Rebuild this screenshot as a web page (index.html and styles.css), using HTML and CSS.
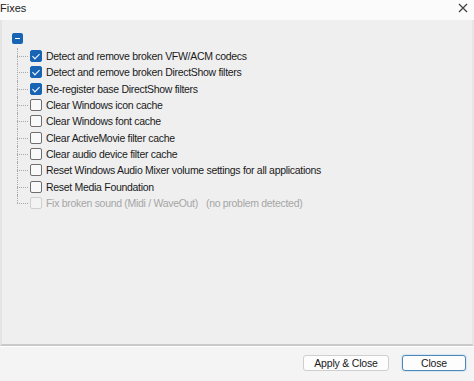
FILE: index.html
```html
<!DOCTYPE html>
<html lang="en">
<head>
    <title>Fixes</title>
    <link rel="stylesheet" href="styles.css">
</head>
<body>
    <div class="window">
        <div class="titlebar">
            <span class="title">Fixes</span>
            <svg class="close-x" width="10" height="10" viewBox="0 0 10 10"><path d="M1 1L9 9M9 1L1 9" stroke="#444" stroke-width="1.3"/></svg>
        </div>
        <div class="panel">
            <div class="root">
                <span class="toggle"><span class="bar"></span></span>
            </div>
            <ul class="tree">
                <li><span class="box checked"></span>Detect and remove broken VFW/ACM codecs</li>
                <li><span class="box checked"></span>Detect and remove broken DirectShow filters</li>
                <li><span class="box checked"></span>Re-register base DirectShow filters</li>
                <li><span class="box"></span>Clear Windows icon cache</li>
                <li><span class="box"></span>Clear Windows font cache</li>
                <li><span class="box"></span>Clear ActiveMovie filter cache</li>
                <li><span class="box"></span>Clear audio device filter cache</li>
                <li><span class="box"></span>Reset Windows Audio Mixer volume settings for all applications</li>
                <li><span class="box"></span>Reset Media Foundation</li>
                <li class="disabled last"><span class="box"></span>Fix broken sound (Midi / WaveOut)<span class="note">(no problem detected)</span></li>
            </ul>
        </div>
        <div class="footer">
            <button class="btn">Apply &amp; Close</button>
            <button class="btn default">Close</button>
        </div>
    </div>
</body>
</html>
```
FILE: styles.css
```css
body{
    margin: 0;
    font-family: "Liberation Sans", Arial, sans-serif;
    font-size: 10.5px;
    letter-spacing: -0.3px;
    color: #1a1a1a;
    background-color: #f7f7f7;
}
.window{
    width: 474px;
    height: 381px;
    display: flex;
    flex-direction: column;
}
.titlebar{
    height: 20px;
    display: flex;
    align-items: center;
    justify-content: space-between;
    padding: 0 6px 4px 0;
    box-sizing: border-box;
    background-color: #fbfbfb;
}
.title{
    font-size: 11px;
    letter-spacing: 0;
    color: #222;
}
.panel{
    flex: 1;
    background-color: #efefef;
    border-left: 2px solid #e4e4e4;
    border-right: 2px solid #e6e6e6;
    border-bottom: 2px solid #c9c9c9;
    padding: 13px 0 0 10px;
}
.root{
    height: 11px;
    display: flex;
}
.toggle{
    width: 11px;
    height: 11px;
    border-radius: 2px;
    background-color: #1864b4;
    display: flex;
    align-items: center;
    justify-content: center;
}
.bar{
    width: 5px;
    height: 1px;
    background-color: #fff;
}
.tree{
    list-style: none;
    margin: 4px 0 0 5px;
    padding: 0;
}
.tree li{
    position: relative;
    height: 16.3px;
    display: flex;
    align-items: center;
    padding-left: 13px;
    white-space: nowrap;
}
.tree li::before{
    content: "";
    position: absolute;
    left: 0;
    top: 0;
    bottom: 0;
    border-left: 1px dotted #a8a8a8;
}
.tree li.last::before{
    bottom: 50%;
}
.tree li::after{
    content: "";
    position: absolute;
    left: 0;
    width: 11px;
    top: 50%;
    border-top: 1px dotted #a8a8a8;
}
.box{
    width: 10px;
    height: 10px;
    border: 1px solid #6e6e6e;
    border-radius: 2px;
    background-color: #f9f9f9;
    margin-right: 4px;
    flex: none;
    position: relative;
}
.box.checked{
    background-color: #1864b4;
    border-color: #1864b4;
}
.box.checked::after{
    content: "";
    position: absolute;
    left: 3px;
    top: 1px;
    width: 3px;
    height: 6px;
    border: solid #fff;
    border-width: 0 1.5px 1.5px 0;
    transform: rotate(45deg);
}
.disabled{
    color: #a6a6a6;
}
.disabled .box{
    border-color: #cfcfcf;
    background-color: #f3f3f3;
}
.note{
    margin-left: 8px;
}
.footer{
    height: 35px;
    background-color: #f4f4f4;
    border-top: 1px solid #fff;
    display: flex;
    justify-content: flex-end;
    align-items: flex-start;
    gap: 13px;
    padding: 8px 8px 0 0;
    box-sizing: border-box;
}
.btn{
    font-family: "Liberation Sans", Arial, sans-serif;
    font-size: 10.5px;
    letter-spacing: -0.2px;
    color: #1a1a1a;
    height: 16px;
    padding: 0;
    background-color: #fdfdfd;
    border: 1px solid #cfcfcf;
    border-radius: 3px;
    width: 86px;
}
.btn.default{
    width: 64px;
    border: 1px solid #4f88b4;
    box-shadow: 0 0 0 1px #d6e6f2;
}
```
